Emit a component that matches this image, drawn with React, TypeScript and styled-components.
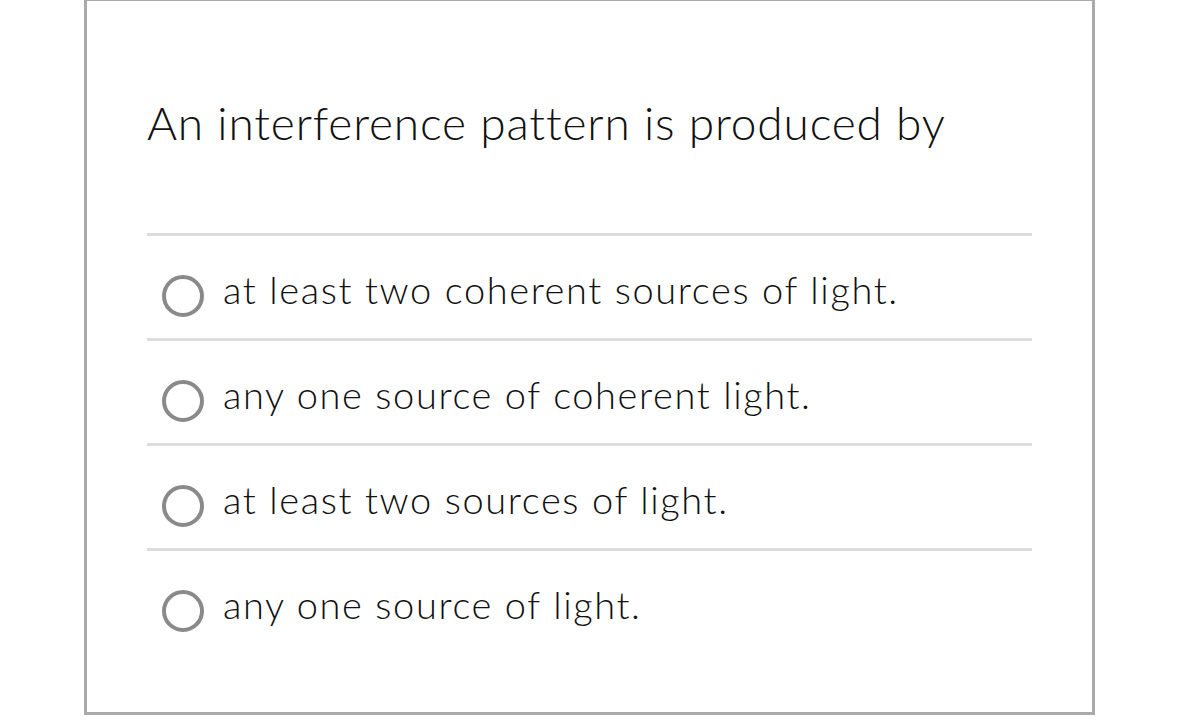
import React from "react";
import styled, { createGlobalStyle } from "styled-components";

const Global = createGlobalStyle`
  html, body { margin: 0; padding: 0; background: #fff; }
  body { font-family: Lato, "Open Sans", sans-serif; }
`;

const Page = styled.div`
  padding-left: 84px;
  width: 1179px;
  height: 726px;
  overflow: hidden;
  box-sizing: border-box;
`;

const Card = styled.div`
  margin-top: -2px;
  width: 1011px;
  height: 717px;
  box-sizing: border-box;
  border: 3px solid #aaaaaa;
  background: #fff;
  padding: 0 60px 57px;
  display: flex;
  flex-direction: column;
`;

const Question = styled.div`
  font-family: Lato, sans-serif;
  font-weight: 300;
  font-size: 46px;
  letter-spacing: 0.85px;
  line-height: 56px;
  color: #111;
  padding-top: 94px;
  height: 232px;
  box-sizing: border-box;
`;

const Option = styled.label`
  display: flex;
  align-items: center;
  gap: 19px;
  height: 105px;
  box-sizing: border-box;
  border-top: 3px solid #dddddd;
  padding: 18px 0 0 15px;
  cursor: pointer;
`;

const Radio = styled.span`
  width: 42px;
  height: 42px;
  box-sizing: border-box;
  border-radius: 50%;
  border: 4px solid #8a8a8a;
  flex: none;
`;

const OptionText = styled.span`
  font-family: Lato, sans-serif;
  font-weight: 300;
  font-size: 38px;
  letter-spacing: 1.6px;
  line-height: 46px;
  color: #111;
  margin-bottom: 14px;
`;

const options = [
  "at least two coherent sources of light.",
  "any one source of coherent light.",
  "at least two sources of light.",
  "any one source of light.",
];

export default function App() {
  return (
    <>
      <Global />
      <Page>
        <Card>
          <Question>An interference pattern is produced by</Question>
          {options.map((o) => (
            <Option key={o}>
              <Radio />
              <OptionText>{o}</OptionText>
            </Option>
          ))}
        </Card>
      </Page>
    </>
  );
}
